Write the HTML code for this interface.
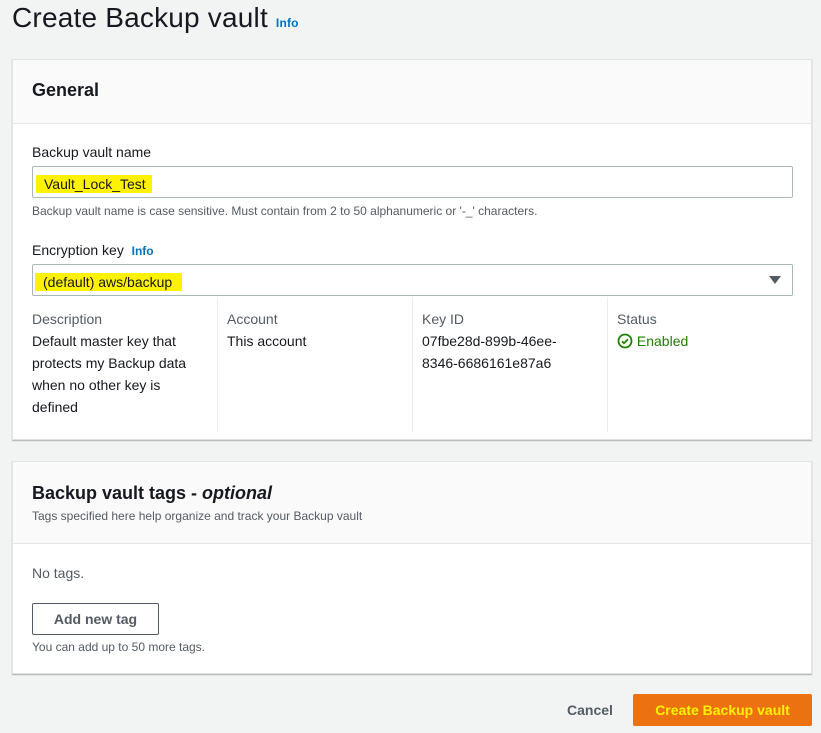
<!DOCTYPE html>
<html><head><meta charset="utf-8"><style>
*{box-sizing:border-box;margin:0;padding:0}
body{width:821px;height:733px;background:#f2f3f3;font-family:"Liberation Sans",sans-serif;color:#16191f;position:relative;overflow:hidden}
.abs{position:absolute}
h1{position:absolute;left:12px;top:2px;font-size:28px;font-weight:normal;color:#16191f;letter-spacing:0.2px}
.info{color:#0073bb;font-weight:bold;font-size:12px}
.panel{position:absolute;left:12px;width:800px;background:#fff;border:1px solid #e0e3e3;box-shadow:0 1px 1px rgba(0,28,36,.3)}
.hdr{background:#fafafa;border-bottom:1px solid #e4e6e6}
.lbl{font-size:14px;color:#16191f}
.input{position:absolute;left:19px;width:761px;height:32px;border:1px solid #aab7b8;border-radius:2px;background:#fff}
.hl{position:absolute;background:#fff200;font-size:14px;line-height:18px;padding:0 6px 0 8px;color:#16191f}
.small{font-size:12px;color:#545b64}
.col{position:absolute;top:0;height:135px;font-size:14px;line-height:22px}
.sep{position:absolute;top:0;width:1px;height:135px;background:#eaeded}
.ch{color:#545b64}
</style></head><body>
<h1>Create Backup vault <span class="info">Info</span></h1>

<div class="panel" style="top:59px;height:381px">
  <div class="hdr" style="height:64px"><div class="abs" style="left:19px;top:20px;font-size:18px;font-weight:bold">General</div></div>
  <div class="abs lbl" style="left:19px;top:84px">Backup vault name</div>
  <div class="input" style="top:106px"><div class="hl" style="left:3px;top:8px">Vault_Lock_Test</div></div>
  <div class="abs small" style="left:19px;top:144px">Backup vault name is case sensitive. Must contain from 2 to 50 alphanumeric or '-_' characters.</div>
  <div class="abs lbl" style="left:19px;top:182px">Encryption key &nbsp;<span class="info">Info</span></div>
  <div class="input" style="top:204px"><div class="hl" style="left:2px;top:8px;padding-right:10px">(default) aws/backup</div>
    <svg class="abs" style="right:11px;top:11px" width="12" height="9"><path d="M0 0H12L6 8Z" fill="#545b64"/></svg></div>
  <div class="abs" style="left:0;top:237px;width:800px;height:135px">
    <div class="col" style="left:19px;width:165px;top:11px"><div class="ch">Description</div>Default master key that protects my Backup data when no other key is defined</div>
    <div class="sep" style="left:204px"></div>
    <div class="col" style="left:214px;top:11px"><div class="ch">Account</div>This account</div>
    <div class="sep" style="left:399px"></div>
    <div class="col" style="left:409px;width:155px;top:11px"><div class="ch">Key ID</div>07fbe28d-899b-46ee-<br>8346-6686161e87a6</div>
    <div class="sep" style="left:594px"></div>
    <div class="col" style="left:604px;top:11px"><div class="ch">Status</div><span style="color:#1d8102"><svg width="16" height="16" style="vertical-align:-3px"><circle cx="8" cy="8" r="6.5" fill="none" stroke="#1d8102" stroke-width="1.8"/><path d="M5 8.2l2 2 4-4" fill="none" stroke="#1d8102" stroke-width="1.8"/></svg> Enabled</span></div>
  </div>
</div>

<div class="panel" style="top:461px;height:213px">
  <div class="hdr" style="height:82px">
    <div class="abs" style="left:19px;top:21px;font-size:18px;font-weight:bold">Backup vault tags - <i>optional</i></div>
    <div class="abs small" style="left:19px;top:47px">Tags specified here help organize and track your Backup vault</div>
  </div>
  <div class="abs" style="left:19px;top:103px;font-size:14px;color:#545b64">No tags.</div>
  <div class="abs" style="left:19px;top:141px;width:127px;height:32px;border:1px solid #545b64;border-radius:2px;font-size:14px;font-weight:bold;color:#545b64;text-align:center;line-height:30px">Add new tag</div>
  <div class="abs small" style="left:19px;top:178px">You can add up to 50 more tags.</div>
</div>

<div class="abs" style="left:567px;top:702px;font-size:14px;font-weight:bold;color:#545b64">Cancel</div>
<div class="abs" style="left:633px;top:694px;width:179px;height:32px;background:#ec7211;border-radius:2px;color:#fff200;font-size:14px;font-weight:bold;text-align:center;line-height:32px">Create Backup vault</div>
</body></html>
